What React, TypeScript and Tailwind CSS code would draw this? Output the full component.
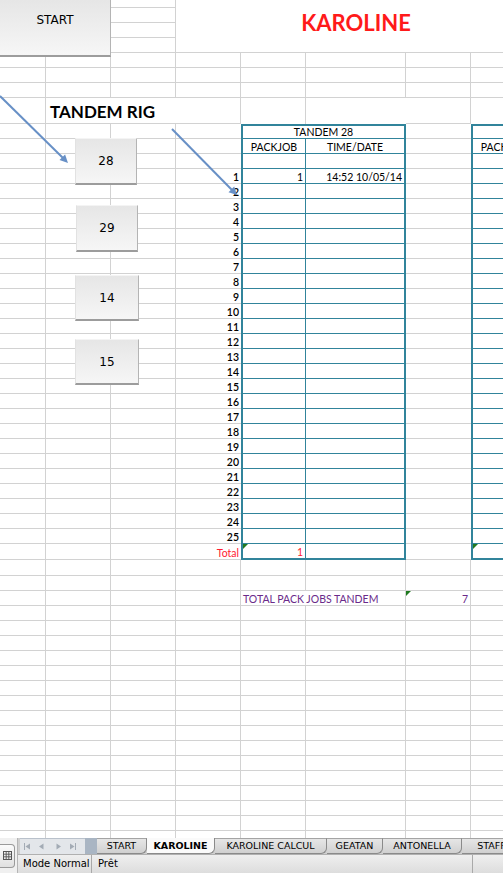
import type { ReactNode } from 'react';

const GRID = 'border-[#d2d2d2]';
const TEAL = 'border-[#31849b]';
const SHEET_FONT = "font-['Lato',sans-serif]";
const UI_FONT = "font-['DejaVu_Sans',sans-serif]";

// sheet column widths, A..I
const W = ['w-[46px]', 'w-[65px]', 'w-[65px]', 'w-[65px]', 'w-[65px]', 'w-[100px]', 'w-[65px]', 'w-[65px]', 'w-[100px]'];

function Cell({className = '', children}: {className?: string; children?: ReactNode}) {
  return (
    <div className={`relative flex h-full shrink-0 items-end whitespace-nowrap px-[2px] pb-[1px] text-[10.5px] leading-none ${className}`}>
      {children}
    </div>
  );
}

function Flag() {
  return <span className="absolute left-0 top-0 h-0 w-0 border-r-[5px] border-t-[5px] border-r-transparent border-t-[#1f7a1f]" />;
}

function PlainRow({h}: {h: string}) {
  return (
    <div className={`flex shrink-0 ${h}`}>
      {W.map((w, i) => (
        <Cell key={i} className={`${w} border-r border-b ${GRID}`} />
      ))}
    </div>
  );
}

function LeadCells({upto}: {upto: number}) {
  return (
    <>
      {W.slice(0, upto).map((w, i) => (
        <Cell key={i} className={`${w} border-r border-b ${GRID}`} />
      ))}
    </>
  );
}

function HeadRow({h, children}: {h: string; children: [ReactNode, ReactNode]}) {
  return (
    <div className={`flex shrink-0 ${h}`}>
      <LeadCells upto={3} />
      <Cell className={`${W[3]} border-b ${GRID}`} />
      <Cell className={`w-[165px] justify-center border-x-2 border-t-2 border-b ${TEAL}`}>{children[0]}</Cell>
      <Cell className={`${W[6]} border-b ${GRID}`} />
      <Cell className={`w-[165px] justify-center border-x-2 border-t-2 border-b ${TEAL}`}>{children[1]}</Cell>
    </div>
  );
}

interface TableRowProps {
  h?: string;
  label?: ReactNode;
  a?: ReactNode;
  b?: ReactNode;
  a2?: ReactNode;
  b2?: ReactNode;
  center?: boolean;
  total?: boolean;
}

function TableRow({h = 'h-[15px]', label, a, b, a2, b2, center, total}: TableRowProps) {
  const bottom = total ? 'border-b-2' : 'border-b';
  const align = center ? 'justify-center' : 'justify-end';
  return (
    <div className={`flex shrink-0 ${h}`}>
      <LeadCells upto={3} />
      <Cell className={`${W[3]} justify-end border-b ${GRID}`}>{label}</Cell>
      <Cell className={`${W[4]} ${align} border-l-2 border-r ${bottom} ${TEAL}`}>
        {total && <Flag />}
        {a}
      </Cell>
      <Cell className={`${W[5]} ${align} border-r-2 ${bottom} ${TEAL}`}>{b}</Cell>
      <Cell className={`${W[6]} border-b ${GRID}`} />
      <Cell className={`${W[7]} ${align} border-l-2 border-r ${bottom} ${TEAL}`}>
        {total && <Flag />}
        {a2}
      </Cell>
      <Cell className={`${W[8]} ${align} border-r-2 ${bottom} ${TEAL}`}>{b2}</Cell>
    </div>
  );
}

function SheetButton({className, children}: {className: string; children: ReactNode}) {
  return (
    <div
      className={`absolute flex justify-center border border-b-2 border-t-[#f4f4f4] border-l-[#e2e2e2] border-r-[#b4b4b4] border-b-[#9c9c9c] bg-linear-to-b from-[#e6e6e6] to-[#f6f6f6] text-[12px] text-black ${UI_FONT} ${className}`}
    >
      {children}
    </div>
  );
}

function Arrows() {
  return (
    <svg className="pointer-events-none absolute left-0 top-0" width="503" height="838">
      <g stroke="#6890c6" strokeWidth="2" fill="#6890c6">
        <line x1="0" y1="96" x2="63" y2="158" />
        <polygon points="68,163 59.5,160.1 65.1,154.5" stroke="none" />
        <line x1="172" y1="129" x2="232" y2="190" />
        <polygon points="237,195 228.5,192.2 234.2,186.5" stroke="none" />
      </g>
    </svg>
  );
}

const TABS = [
  {label: 'START', w: 'w-[50px]'},
  {label: 'KAROLINE', w: 'w-[68px]', active: true},
  {label: 'KAROLINE CALCUL', w: 'w-[112px]'},
  {label: 'GEATAN', w: 'w-[56px]'},
  {label: 'ANTONELLA', w: 'w-[79px]'},
  {label: 'STAFF', w: 'w-[60px]'}
];

function Footer() {
  return (
    <div className={`flex h-[35px] shrink-0 bg-[#e4e4e4] text-black ${UI_FONT}`}>
      <div className="flex w-[18px] shrink-0 items-center border-r border-[#b5b5b5] bg-[#f0f0f0]">
        <div className="flex h-[24px] w-[15px] items-center justify-center rounded-r-[4px] border border-l-0 border-[#9a9a9a] bg-linear-to-b from-[#fbfbfb] to-[#e0e0e0]">
          <svg width="9" height="9" viewBox="0 0 9 9">
            <rect x="0.5" y="0.5" width="8" height="8" fill="none" stroke="#555" />
            <path d="M3.2 1v7M5.8 1v7M1 3.2h7M1 5.8h7" stroke="#555" strokeWidth="0.9" />
          </svg>
        </div>
      </div>
      <div className="flex min-w-0 flex-1 flex-col">
        <div className="flex h-[16px] shrink-0 bg-[#cfcfcf]">
          <div className="ml-[2px] flex w-[65px] shrink-0 items-center border-t border-[#b9c1cb] bg-[#e3e6ea]">
            <svg width="65" height="15" viewBox="0 0 65 15">
              <g fill="#a3abb5">
                <rect x="4" y="4" width="1" height="7" />
                <polygon points="5.5,7.5 10,4.5 10,10.5" />
                <polygon points="19,7.5 23.5,4.5 23.5,10.5" />
                <polygon points="41,7.5 36.5,4.5 36.5,10.5" />
                <polygon points="54.5,7.5 50,4.5 50,10.5" />
                <rect x="55" y="4" width="1" height="7" />
              </g>
            </svg>
          </div>
          <div className="w-[12px] shrink-0 bg-[#a9b5c3]" />
          {TABS.map((t) => (
            <div
              key={t.label}
              className={`flex ${t.w} shrink-0 items-center justify-center whitespace-nowrap rounded-br-[6px] border-r border-b border-[#8a8a8a] text-[9.5px] leading-none ${
                t.active
                  ? 'bg-[#fafafa] font-bold'
                  : 'border-t border-t-[#a4a4a4] bg-linear-to-b from-[#e6e6e6] to-[#d0d0d0]'
              }`}
            >
              {t.label}
            </div>
          ))}
        </div>
        <div className="flex h-[19px] shrink-0 items-center border-t border-[#b0b0b0] bg-linear-to-b from-[#efefef] to-[#dddddd] text-[10px] leading-none">
          <div className="flex h-full w-[74px] shrink-0 items-center border-r border-[#a9a9a9] pl-[5px]">Mode Normal</div>
          <div className="flex h-full w-[381px] shrink-0 items-center border-r border-[#a9a9a9] pl-[6px]">Prêt</div>
        </div>
      </div>
    </div>
  );
}

export default function App() {
  const rows = Array.from({length: 25}, (_, i) => i + 1);

  return (
    <div className="flex h-[873px] w-[503px] flex-col overflow-hidden bg-white">
      <div className={`relative h-[838px] shrink-0 overflow-hidden text-black ${SHEET_FONT}`}>
        <div className="flex w-[636px] flex-col">
          {/* title band */}
          <div className="flex h-[53px] shrink-0">
            <div className="flex flex-col">
              {['h-[8px]', 'h-[15px]', 'h-[15px]', 'h-[15px]'].map((h, r) => (
                <div key={r} className={`flex ${h}`}>
                  <LeadCells upto={3} />
                </div>
              ))}
            </div>
            <div className={`flex w-[360px] shrink-0 items-center justify-center border-b ${GRID} pb-[7px] text-[22px] font-bold leading-none text-[#ff1a1a]`}>
              KAROLINE
            </div>
            <div className={`w-[100px] shrink-0 border-b ${GRID}`} />
          </div>

          <PlainRow h="h-[15px]" />
          <PlainRow h="h-[15px]" />
          <PlainRow h="h-[15px]" />

          {/* TANDEM RIG */}
          <div className="flex h-[26px] shrink-0">
            <Cell className={`${W[0]} border-r border-b ${GRID}`} />
            <Cell className={`w-[195px] items-center border-r border-b ${GRID} pb-[3px] pl-[4px] text-[17px] font-bold`}>TANDEM RIG</Cell>
            <Cell className={`${W[4]} border-r ${GRID}`} />
            <Cell className={W[5]} />
            <Cell className={`${W[6]} border-r border-b ${GRID}`} />
            <Cell className={`${W[7]} border-r ${GRID}`} />
            <Cell className={W[8]} />
          </div>

          <HeadRow h="h-[15px]">
            {['TANDEM 28', 'TANDEM 29']}
          </HeadRow>
          <TableRow center a="PACKJOB" b="TIME/DATE" a2="PACKJOB" b2="TIME/DATE" />
          <TableRow />
          {rows.map((n) => (
            <TableRow
              key={n}
              label={<span className="font-semibold">{n}</span>}
              a={n === 1 ? '1' : undefined}
              b={n === 1 ? '14:52 10/05/14' : undefined}
            />
          ))}
          <TableRow
            h="h-[16px]"
            total
            label={<span className="text-[#ff2030]">Total</span>}
            a={<span className="text-[#ff2030]">1</span>}
          />

          <PlainRow h="h-[16px]" />
          <PlainRow h="h-[15px]" />

          {/* grand total */}
          <div className="flex h-[15px] shrink-0">
            <LeadCells upto={4} />
            <Cell className={`w-[165px] border-r border-b ${GRID} text-[#6a2a8a]`}>TOTAL PACK JOBS TANDEM</Cell>
            <Cell className={`${W[6]} justify-end border-r border-b ${GRID} text-[#6a2a8a]`}>
              <Flag />7
            </Cell>
            <Cell className={`${W[7]} border-r border-b ${GRID}`} />
            <Cell className={`${W[8]} border-r border-b ${GRID}`} />
          </div>

          {Array.from({length: 16}, (_, i) => (
            <PlainRow key={i} h="h-[15px]" />
          ))}
        </div>

        <SheetButton className="left-0 top-0 h-[57px] w-[111px] border-l-0 border-t-0 pt-[11px]">START</SheetButton>
        <SheetButton className="left-[75px] top-[138px] h-[47px] w-[62px] items-center">28</SheetButton>
        <SheetButton className="left-[76px] top-[205px] h-[47px] w-[62px] items-center">29</SheetButton>
        <SheetButton className="left-[75px] top-[275px] h-[46px] w-[64px] items-center">14</SheetButton>
        <SheetButton className="left-[75px] top-[339px] h-[46px] w-[64px] items-center">15</SheetButton>

        <Arrows />
      </div>
      <Footer />
    </div>
  );
}
